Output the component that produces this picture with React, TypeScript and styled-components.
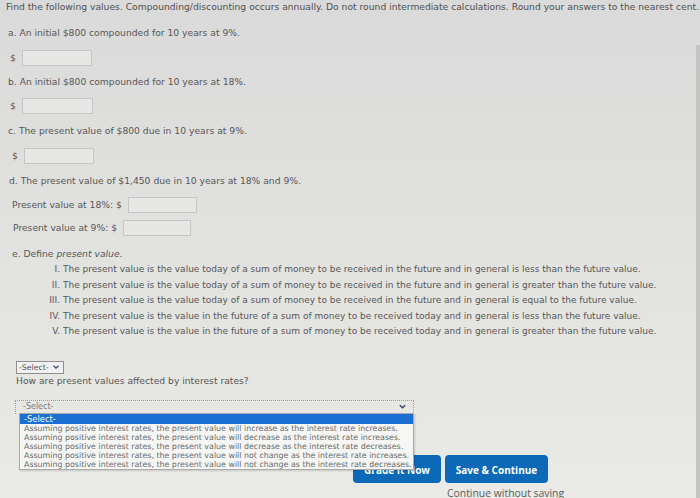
import React from 'react';
import styled, { createGlobalStyle } from 'styled-components';

const GlobalStyle = createGlobalStyle`
  html, body {
    margin: 0;
    padding: 0;
    background: #e2e2e0;
  }
`;

const Page = styled.div`
  position: relative;
  width: 700px;
  height: 498px;
  overflow: hidden;
  box-sizing: border-box;
  padding: 1px 0 0 0;
  background: linear-gradient(180deg, #dadada 0%, #e1e1df 45%, #eaeae6 100%);
  font-family: 'DejaVu Sans', Verdana, sans-serif;
  font-size: 9.2px;
  color: #575757;
`;

const ScrollEdge = styled.div`
  position: absolute;
  right: 0;
  top: 45px;
  width: 4px;
  height: 453px;
  background: #c4c4c2;
`;

const Title = styled.div`
  line-height: 12px;
  padding-left: 6px;
  color: #505050;
  white-space: nowrap;
`;

const Question = styled.div<{ $top: number; $left?: number }>`
  margin-top: ${({ $top }) => $top}px;
  padding-left: ${({ $left }) => $left ?? 8}px;
  line-height: 12px;
  white-space: nowrap;

  em {
    font-style: italic;
  }
`;

const AnswerRow = styled.div<{ $top: number; $left: number }>`
  display: flex;
  align-items: center;
  gap: 6px;
  margin-top: ${({ $top }) => $top}px;
  padding-left: ${({ $left }) => $left}px;
  height: 16px;
`;

const Dollar = styled.span`
  line-height: 12px;
`;

const Field = styled.div<{ $width: number }>`
  width: ${({ $width }) => $width}px;
  height: 14px;
  border: 1px solid #c6c6c6;
  background: #e7e7e6;
`;

const Choices = styled.div`
  margin-top: 2px;
  display: grid;
  grid-template-columns: 60px auto;
  column-gap: 3px;
  font-size: 9px;
  line-height: 15.5px;
  white-space: nowrap;
`;

const Numeral = styled.span`
  text-align: right;
`;

const SmallSelect = styled.div`
  display: inline-flex;
  align-items: center;
  gap: 3px;
  margin: 21px 0 0 16px;
  height: 11px;
  padding: 0 3px 0 2px;
  border: 1px solid #8e8e8e;
  background: #f2f2f2;
  font-size: 7.8px;
  line-height: 11px;
  color: #505050;
`;

const Prompt = styled.div`
  margin-top: 1px;
  padding-left: 16px;
  line-height: 12px;
  white-space: nowrap;
`;

const DottedWrap = styled.div`
  position: relative;
  margin: 13px 0 0 15px;
  width: 397px;
  height: 13px;
  border: 1px dotted #c28a80;
  border-bottom: none;
`;

const SelectBox = styled.div`
  display: flex;
  align-items: center;
  justify-content: space-between;
  margin-left: 3px;
  height: 12px;
  padding: 0 6px 0 4px;
  font-size: 8px;
  color: #7a7a7a;
`;

const Dropdown = styled.div`
  position: absolute;
  left: 3px;
  top: 12px;
  width: 393px;
  background: #f6f6f4;
  border: 1px solid #a9a9a9;
  box-shadow: 1px 1px 2px rgba(0, 0, 0, 0.15);
  font-size: 7.9px;
  z-index: 2;
`;

const OptionItem = styled.div<{ $active?: boolean }>`
  height: ${({ $active }) => ($active ? '10px' : '9.2px')};
  line-height: ${({ $active }) => ($active ? '10px' : '9.2px')};
  padding-left: 4px;
  white-space: nowrap;
  color: ${({ $active }) => ($active ? '#ffffff' : '#6a6a6a')};
  background: ${({ $active }) => ($active ? '#1b6fd4' : 'transparent')};
  font-size: ${({ $active }) => ($active ? '8.4px' : 'inherit')};
`;

const ButtonRow = styled.div`
  display: flex;
  gap: 4px;
  margin: 41px 0 0 353px;
`;

const Button = styled.button<{ $width: number }>`
  width: ${({ $width }) => $width}px;
  height: 28px;
  border: none;
  border-radius: 4px;
  background: #0b69b7;
  color: #ffffff;
  font-family: 'Open Sans', sans-serif;
  font-weight: 700;
  font-size: 10px;
  padding: 3px 0 0 0;
`;

const SkipLink = styled.div`
  margin: 3px 0 0 447px;
  font-family: 'Open Sans', sans-serif;
  font-size: 10.4px;
  line-height: 14px;
  color: #5c5c5c;
  white-space: nowrap;
`;

const Chevron: React.FC<{ size: number }> = ({ size }) => (
  <svg width={size} height={size} viewBox="0 0 10 10" fill="none">
    <path d="M2 3.5 L5 6.5 L8 3.5" stroke="#3a4a6a" strokeWidth="1.6" />
  </svg>
);

const definitions: [string, string][] = [
  ['I.', 'The present value is the value today of a sum of money to be received in the future and in general is less than the future value.'],
  ['II.', 'The present value is the value today of a sum of money to be received in the future and in general is greater than the future value.'],
  ['III.', 'The present value is the value today of a sum of money to be received in the future and in general is equal to the future value.'],
  ['IV.', 'The present value is the value in the future of a sum of money to be received today and in general is less than the future value.'],
  ['V.', 'The present value is the value in the future of a sum of money to be received today and in general is greater than the future value.'],
];

const rateOptions = [
  'Assuming positive interest rates, the present value will increase as the interest rate increases.',
  'Assuming positive interest rates, the present value will decrease as the interest rate increases.',
  'Assuming positive interest rates, the present value will decrease as the interest rate decreases.',
  'Assuming positive interest rates, the present value will not change as the interest rate increases.',
  'Assuming positive interest rates, the present value will not change as the interest rate decreases.',
];

const App: React.FC = () => (
  <Page>
    <GlobalStyle />
    <ScrollEdge />
    <Title>
      Find the following values. Compounding/discounting occurs annually. Do not round intermediate calculations. Round your answers to the nearest cent.
    </Title>

    <Question $top={14}>a. An initial $800 compounded for 10 years at 9%.</Question>
    <AnswerRow $top={11} $left={10}>
      <Dollar>$</Dollar>
      <Field $width={68} />
    </AnswerRow>

    <Question $top={10}>b. An initial $800 compounded for 10 years at 18%.</Question>
    <AnswerRow $top={10} $left={10}>
      <Dollar>$</Dollar>
      <Field $width={69} />
    </AnswerRow>

    <Question $top={11}>c. The present value of $800 due in 10 years at 9%.</Question>
    <AnswerRow $top={11} $left={12}>
      <Dollar>$</Dollar>
      <Field $width={68} />
    </AnswerRow>

    <Question $top={11} $left={9}>d. The present value of $1,450 due in 10 years at 18% and 9%.</Question>
    <AnswerRow $top={10} $left={12}>
      <Dollar>Present value at 18%: $</Dollar>
      <Field $width={67} />
    </AnswerRow>
    <AnswerRow $top={7} $left={13}>
      <Dollar>Present value at 9%: $</Dollar>
      <Field $width={66} />
    </AnswerRow>

    <Question $top={12} $left={12}>
      e. Define <em>present value</em>.
    </Question>
    <Choices>
      {definitions.map(([num, text]) => (
        <React.Fragment key={num}>
          <Numeral>{num}</Numeral>
          <span>{text}</span>
        </React.Fragment>
      ))}
    </Choices>

    <SmallSelect>
      -Select-
      <Chevron size={8} />
    </SmallSelect>
    <Prompt>How are present values affected by interest rates?</Prompt>

    <DottedWrap>
      <SelectBox>
        -Select-
        <Chevron size={9} />
      </SelectBox>
      <Dropdown>
        <OptionItem $active>-Select-</OptionItem>
        {rateOptions.map((opt) => (
          <OptionItem key={opt}>{opt}</OptionItem>
        ))}
      </Dropdown>
    </DottedWrap>

    <ButtonRow>
      <Button $width={88}>Grade It Now</Button>
      <Button $width={103}>Save &amp; Continue</Button>
    </ButtonRow>
    <SkipLink>Continue without saving</SkipLink>
  </Page>
);

export default App;
